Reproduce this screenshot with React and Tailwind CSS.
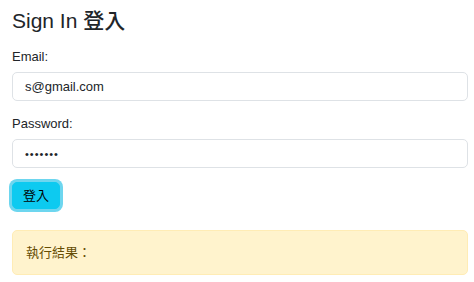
export default function App() {
  const font = { fontFamily: '"Liberation Sans", "Noto Sans CJK TC", sans-serif' }

  return (
    <div className="bg-white text-[#212529] pl-3 pr-[6px] pt-2" style={font}>
      {/* Heading */}
      <h3 className="text-[21px] leading-[25px] font-medium">Sign In 登入</h3>

      {/* Form */}
      <form className="mt-[14px]" onSubmit={(e) => e.preventDefault()}>
        <label className="block text-[13px] leading-[19px] mb-[6px]">Email:</label>
        <input
          type="email"
          defaultValue="s@gmail.com"
          className="block w-full h-[29px] px-[12px] text-[13px] text-[#212529] bg-white border border-[#dee2e6] rounded-[5px] outline-none"
        />

        <label className="block text-[13px] leading-[19px] mt-[13px] mb-[6px]">Password:</label>
        <input
          type="password"
          defaultValue="1234567"
          className="block w-full h-[29px] px-[12px] text-[11px] text-[#212529] bg-white border border-[#dee2e6] rounded-[5px] outline-none tracking-[1px]"
        />

        <button
          type="submit"
          className="block mt-[14px] ml-0 h-[27px] px-[10px] text-[13px] text-black bg-[#0dcaf0] border border-[#0dcaf0] rounded-[5px] ring-[3px] ring-[#6dd6ef]"
        >
          登入
        </button>
      </form>

      {/* Result */}
      <div className="mt-[21px] h-[45px] flex items-center px-[13px] bg-[#fff3cd] border border-[#ffecb5] rounded-[5px] text-[13px] text-[#664d03]">
        執行結果：
      </div>
    </div>
  )
}
